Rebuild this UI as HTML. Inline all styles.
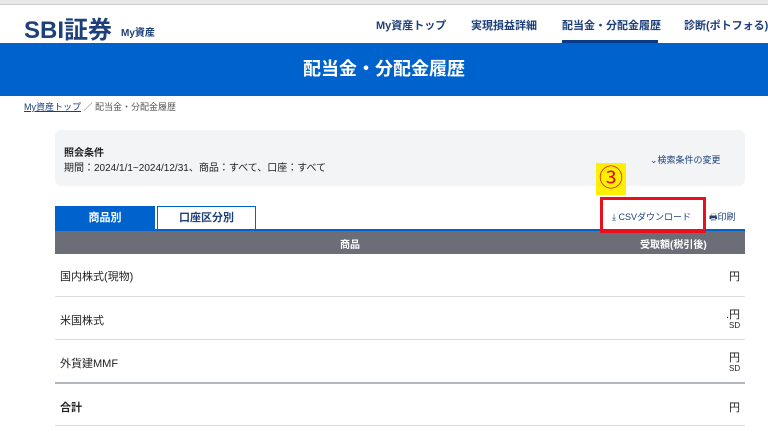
<!DOCTYPE html><html><head><meta charset="utf-8"><style>
*{margin:0;padding:0;box-sizing:border-box}
body{width:768px;height:447px;overflow:hidden;background:#fff;font-family:"Liberation Sans","Noto Sans CJK JP",sans-serif;color:#222;position:relative}
.a{position:absolute;white-space:nowrap}
</style></head><body>
<div class="a" style="left:0;top:0;width:768px;height:5px;background:#e8e8e8;border-bottom:1px solid #ccc"></div>
<div class="a" style="left:24px;top:10px;font-size:24px;font-weight:bold;color:#1d3f7a;letter-spacing:0px">SBI証券</div>
<div class="a" style="left:121px;top:24px;font-size:10px;font-weight:bold;color:#1d3f7a">My資産</div>
<div class="a" style="left:376px;top:17px;font-size:11px;font-weight:bold;color:#1d3f7a">My資産トップ</div>
<div class="a" style="left:471px;top:17px;font-size:11px;font-weight:bold;color:#1d3f7a">実現損益詳細</div>
<div class="a" style="left:562px;top:17px;font-size:11px;font-weight:bold;color:#1d3f7a">配当金・分配金履歴</div>
<div class="a" style="left:684px;top:17px;font-size:11px;font-weight:bold;color:#1d3f7a">診断(ポトフォる)</div>
<div class="a" style="left:0;top:43px;width:768px;height:53px;background:#0062cc"></div>
<div class="a" style="left:562px;top:40px;width:96px;height:3px;background:#0a3a8a"></div>
<div class="a" style="left:0;top:55px;width:768px;text-align:center;font-size:18px;font-weight:bold;color:#fff">配当金・分配金履歴</div>
<div class="a" style="left:24px;top:100px;font-size:9px;color:#555"><span style="text-decoration:underline;color:#1d3f7a">My資産トップ</span> ／ 配当金・分配金履歴</div>
<div class="a" style="left:55px;top:130px;width:690px;height:56px;background:#f3f4f6;border-radius:6px"></div>
<div class="a" style="left:64px;top:144px;font-size:10px;font-weight:bold">照会条件</div>
<div class="a" style="left:64px;top:159px;font-size:10px">期間：2024/1/1~2024/12/31、商品：すべて、口座：すべて</div>
<div class="a" style="left:650px;top:153px;font-size:9px;color:#1d3f7a">⌄検索条件の変更</div>
<div class="a" style="left:596px;top:163px;width:30px;height:32px;background:#ffef00;color:#e01010;font-size:24px;line-height:32px;text-align:center">③</div>
<div class="a" style="left:55px;top:206px;width:100px;height:24px;background:#0062cc;color:#fff;font-size:11px;font-weight:bold;text-align:center;line-height:24px">商品別</div>
<div class="a" style="left:157px;top:206px;width:99px;height:24px;border:1px solid #0062cc;border-bottom:none;color:#1d3f7a;font-size:11px;font-weight:bold;text-align:center;line-height:22px">口座区分別</div>
<div class="a" style="left:612px;top:210px;font-size:9px;color:#1d3f7a">⤓ CSVダウンロード</div>
<div class="a" style="left:709px;top:210px;font-size:9px;color:#1d3f7a">🖶印刷</div>
<div class="a" style="left:55px;top:229px;width:690px;height:2px;background:#0062cc"></div>
<div class="a" style="left:55px;top:231px;width:690px;height:23px;background:#6b6e76"></div>
<div class="a" style="left:340px;top:236px;font-size:10px;font-weight:bold;color:#fff">商品</div>
<div class="a" style="left:640px;top:236px;font-size:10px;font-weight:bold;color:#fff">受取額(税引後)</div>
<div class="a" style="left:600px;top:197px;width:106px;height:36px;border:3px solid #e8101e"></div>
<div class="a" style="left:60px;top:268px;font-size:11px">国内株式(現物)</div>
<div class="a" style="left:729px;top:268px;font-size:11px">円</div>
<div class="a" style="left:55px;top:296px;width:690px;height:1px;background:#d8dbe0"></div>
<div class="a" style="left:60px;top:312px;font-size:11px">米国株式</div>
<div class="a" style="left:726px;top:306px;font-size:11px">.円</div>
<div class="a" style="left:729px;top:321px;font-size:8px">SD</div>
<div class="a" style="left:55px;top:339px;width:690px;height:1px;background:#d8dbe0"></div>
<div class="a" style="left:60px;top:355px;font-size:11px">外貨建MMF</div>
<div class="a" style="left:729px;top:349px;font-size:11px">円</div>
<div class="a" style="left:729px;top:364px;font-size:8px">SD</div>
<div class="a" style="left:55px;top:382px;width:690px;height:2px;background:#b0b5be"></div>
<div class="a" style="left:60px;top:399px;font-size:11px;font-weight:bold">合計</div>
<div class="a" style="left:729px;top:399px;font-size:11px">円</div>
<div class="a" style="left:55px;top:425px;width:690px;height:1px;background:#d8dbe0"></div>
</body></html>
